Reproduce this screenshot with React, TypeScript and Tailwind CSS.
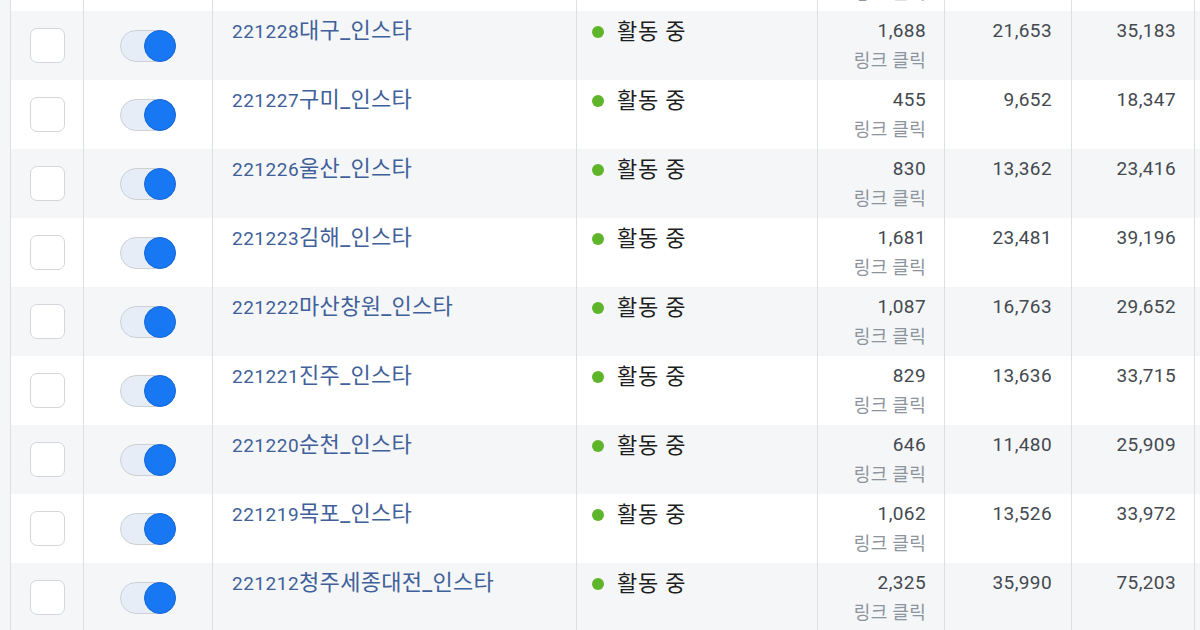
import React from 'react';

type Row = { name: string; results: string; reach: string; impressions: string };

const rows: Row[] = [
  { name: '221228대구_인스타', results: '1,688', reach: '21,653', impressions: '35,183' },
  { name: '221227구미_인스타', results: '455', reach: '9,652', impressions: '18,347' },
  { name: '221226울산_인스타', results: '830', reach: '13,362', impressions: '23,416' },
  { name: '221223김해_인스타', results: '1,681', reach: '23,481', impressions: '39,196' },
  { name: '221222마산창원_인스타', results: '1,087', reach: '16,763', impressions: '29,652' },
  { name: '221221진주_인스타', results: '829', reach: '13,636', impressions: '33,715' },
  { name: '221220순천_인스타', results: '646', reach: '11,480', impressions: '25,909' },
  { name: '221219목포_인스타', results: '1,062', reach: '13,526', impressions: '33,972' },
  { name: '221212청주세종대전_인스타', results: '2,325', reach: '35,990', impressions: '75,203' },
];

const Toggle: React.FC = () => (
  <div className="relative w-[56px] h-[32px] rounded-full bg-[#e6edf7] border border-[#cdd1d6]">
    <div className="absolute right-[-1px] top-[-1px] w-[32px] h-[32px] rounded-full bg-[#1877f2] border border-[#1668dc]" />
  </div>
);

const cell = 'shrink-0 border-r border-[#dddfe2]';
const num = 'text-[19px] leading-[24px] tracking-[0.4px] text-[#444950]';
const label = 'text-[18px] leading-[22px] tracking-[0.3px] text-[#8d949e]';

// the row cut off at the top edge: only the bottom of its "링크 클릭" label shows
const PartialRow: React.FC = () => (
  <div className="flex h-[11px] overflow-hidden bg-white">
    <div className={`w-[73px] ${cell}`} />
    <div className={`w-[129px] ${cell}`} />
    <div className={`w-[364px] ${cell}`} />
    <div className={`w-[241px] ${cell}`} />
    <div className={`w-[127px] ${cell} pr-[18px] flex flex-col items-end`}>
      <span className={`${label} mt-[-18px]`}>링크 클릭</span>
    </div>
    <div className={`w-[127px] ${cell}`} />
    <div className={`w-[123px] ${cell}`} />
    <div className="flex-1" />
  </div>
);

const TableRow: React.FC<{ row: Row; striped: boolean }> = ({ row, striped }) => {
  const m = row.name.match(/^(\d+)(.*)$/);
  const code = m ? m[1] : '';
  const rest = m ? m[2] : row.name;
  return (
    <div className={`flex h-[69px] ${striped ? 'bg-[#f5f6f7]' : 'bg-white'}`}>
      <div className={`w-[73px] ${cell} flex items-center justify-center`}>
        <div className="w-[35px] h-[35px] rounded-[7px] border border-[#d3d6db] bg-white" />
      </div>
      <div className={`w-[129px] ${cell} flex items-center justify-center`}>
        <Toggle />
      </div>
      <div className={`w-[364px] ${cell} pl-[19px] pt-[8px] leading-[24px]`}>
        <span className="text-[#40609a]">
          <span className="text-[19px] tracking-[0.5px]">{code}</span>
          <span className="text-[22px] tracking-[0.3px]">{rest}</span>
        </span>
      </div>
      <div className={`w-[241px] ${cell} pl-[15px] pt-[8px] flex items-start`}>
        <div className="flex items-center h-[24px] mt-[1px]">
          <span className="w-[12px] h-[12px] rounded-full bg-[#5fb52a]" />
          <span className="ml-[13px] text-[22px] leading-[24px] tracking-[0.8px] text-[#1c1e21]">활동 중</span>
        </div>
      </div>
      <div className={`w-[127px] ${cell} pr-[18px] pt-[8px] flex flex-col items-end`}>
        <span className={num}>{row.results}</span>
        <span className={`${label} mt-[7px]`}>링크 클릭</span>
      </div>
      <div className={`w-[127px] ${cell} pr-[19px] pt-[8px] text-right`}>
        <span className={num}>{row.reach}</span>
      </div>
      <div className={`w-[123px] ${cell} pr-[18px] pt-[8px] text-right`}>
        <span className={num}>{row.impressions}</span>
      </div>
      <div className="flex-1" />
    </div>
  );
};

export default function App() {
  return (
    <div className="w-[1200px] h-[630px] overflow-hidden bg-white flex font-['Roboto','Noto_Sans_CJK_KR',sans-serif]">
      <div className="w-[11px] shrink-0 bg-[#f5f6f7] border-r border-[#dddfe2]" />
      <div className="flex-1">
        <PartialRow />
        {rows.map((row, i) => (
          <TableRow key={row.name} row={row} striped={i % 2 === 0} />
        ))}
      </div>
    </div>
  );
}
